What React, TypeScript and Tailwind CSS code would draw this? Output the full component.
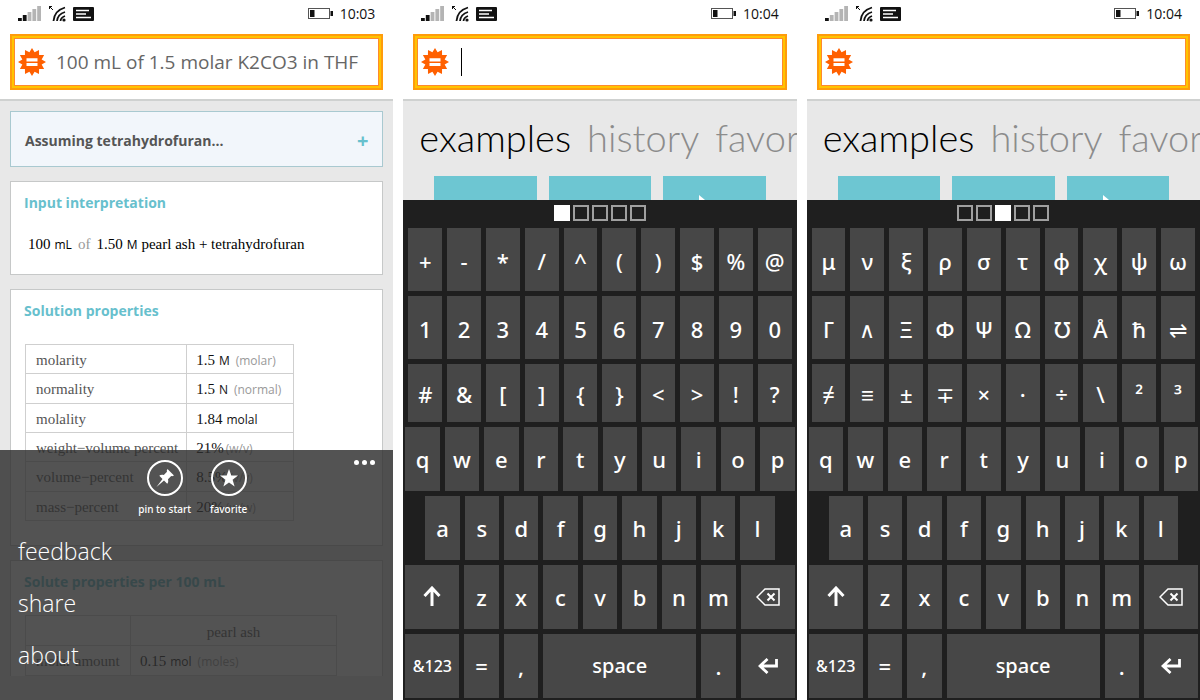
import { useState } from "react";
import type { ReactNode } from "react";

// ─── data ───────────────────────────────────────────────────────────────────

type PropertyRow = { name: string; value: string; unit: string; note?: string; tight?: boolean };

const SOLUTION_ROWS: PropertyRow[] = [
  { name: "molarity", value: "1.5", unit: "M", note: "(molar)" },
  { name: "normality", value: "1.5", unit: "N", note: "(normal)" },
  { name: "molality", value: "1.84", unit: "molal" },
  { name: "weight−volume percent", value: "21%", unit: "", note: "(w/v)", tight: true },
  { name: "volume−percent", value: "8.5%", unit: "", note: "(v/v)", tight: true },
  { name: "mass−percent", value: "20%", unit: "", note: "(w/w)", tight: true },
];

const SYMBOL_ROWS = [
  ["+", "-", "*", "/", "^", "(", ")", "$", "%", "@"],
  ["1", "2", "3", "4", "5", "6", "7", "8", "9", "0"],
  ["#", "&", "[", "]", "{", "}", "<", ">", "!", "?"],
];

const GREEK_ROWS = [
  ["μ", "ν", "ξ", "ρ", "σ", "τ", "φ", "χ", "ψ", "ω"],
  ["Γ", "∧", "Ξ", "Φ", "Ψ", "Ω", "℧", "Å", "ħ", "⇌"],
  ["≠", "≡", "±", "∓", "×", "·", "÷", "\\", "²", "³"],
];

// ─── icons ──────────────────────────────────────────────────────────────────

function LogoIcon() {
  const points = Array.from({ length: 24 }, (_, i) => {
    const r = i % 2 === 0 ? 14 : 10;
    const a = (i * Math.PI) / 12;
    return `${(14 + r * Math.sin(a)).toFixed(2)},${(14 - r * Math.cos(a)).toFixed(2)}`;
  }).join(" ");
  return (
    <svg viewBox="0 0 28 28" className="size-7 shrink-0" aria-hidden="true">
      <polygon points={points} fill="#ff6000" />
      <path d="M8.500 10.300h11v3.200h-11zM8.500 14.900h11v3.200h-11z" fill="#fff" />
    </svg>
  );
}

function SignalIcon({ bars }: { bars: number }) {
  return (
    <svg viewBox="0 0 24 16" className="h-4 w-6" aria-hidden="true">
      {[3, 6, 9, 12, 15].map((h, i) => (
        <rect key={h} x={i * 4.8} y={15 - h} width="3.8" height={h} fill={i < bars ? "#111" : "#b4b4b4"} />
      ))}
    </svg>
  );
}

function WifiIcon() {
  return (
    <svg viewBox="0 0 17 16" className="h-4 w-[17px]" fill="none" stroke="#111" strokeWidth="1.8" aria-hidden="true">
      <path d="M4.500 15C5 8.500 9 3.500 16 1.500M8 15C8.500 10.500 11 7.500 16 6M11.500 15C11.800 12.500 13 11 16 10" />
      <path d="M0 0h3L0 3zM1 1l3 3" fill="#111" strokeWidth="1" />
      <circle cx="15" cy="14" r="1.600" fill="#111" stroke="none" />
    </svg>
  );
}

function MessageIcon() {
  return (
    <svg viewBox="0 0 21 14" className="h-3.5 w-[21px]" aria-hidden="true">
      <rect width="21" height="14" rx="1" fill="#111" />
      <path d="M3 3.500h13M3 7h10M3 10.500h15" stroke="#fff" strokeWidth="1.500" />
    </svg>
  );
}

function BatteryIcon() {
  return (
    <svg viewBox="0 0 25 11" className="h-[11px] w-[25px]" aria-hidden="true">
      <rect x=".5" y=".5" width="21" height="10" fill="#fff" stroke="#555" />
      <rect x="2" y="2" width="4.500" height="7" fill="#111" />
      <rect x="22.500" y="3" width="2.500" height="5" fill="#111" />
    </svg>
  );
}

function PinIcon() {
  return (
    <svg viewBox="0 0 20 20" className="size-5" fill="#fff" aria-hidden="true">
      <path d="M12.500 1l6.500 6.500-1.800.8-1-.3-3.200 3.200c.5 2 .2 3.500-.8 4.500L9 12.500 1.500 19 7.500 11 4.300 7.800c1-1 2.500-1.300 4.500-.8L12 3.800l-.3-1z" />
    </svg>
  );
}

function StarIcon() {
  return (
    <svg viewBox="0 0 20 20" className="size-5" fill="#fff" aria-hidden="true">
      <path d="M10 1l2.300 6.500H19l-5.400 4.200 2 6.800L10 14.400l-5.600 4.100 2-6.800L1 7.500h6.700z" />
    </svg>
  );
}

function ShiftIcon() {
  return (
    <svg viewBox="0 0 18 22" className="h-[22px] w-[18px]" fill="none" stroke="#fff" strokeWidth="3" aria-hidden="true">
      <path d="M9 20V2M1.500 10L9 2l7.500 8" />
    </svg>
  );
}

function BackspaceIcon() {
  return (
    <svg viewBox="0 0 24 18" className="h-[18px] w-6" fill="none" stroke="#fff" strokeWidth="1.500" aria-hidden="true">
      <path d="M9 1h14v16H9L1 9z" />
      <path d="M11.500 5.500l7 7M18.500 5.500l-7 7" strokeWidth="2" />
    </svg>
  );
}

function EnterIcon() {
  return (
    <svg viewBox="0 0 20 16" className="h-4 w-5" fill="none" stroke="#fff" strokeWidth="2.800" aria-hidden="true">
      <path d="M18.500 1v7H2M9.500 1L2 8l7.500 7" />
    </svg>
  );
}

// ─── shared parts ───────────────────────────────────────────────────────────

function StatusBar({ time, bars }: { time: string; bars: number }) {
  return (
    <div className="flex h-[34px] items-center justify-between px-[18px] pb-[7px]">
      <div className="flex items-center gap-[7px]">
        <SignalIcon bars={bars} />
        <WifiIcon />
        <MessageIcon />
      </div>
      <div className="flex items-center gap-[7px] text-sm text-[#111]">
        <BatteryIcon />
        <time>{time}</time>
      </div>
    </div>
  );
}

function SearchBox({ initial, caret }: { initial: string; caret?: boolean }) {
  const [query, setQuery] = useState(initial);
  return (
    <div className="border-b-2 border-[#cfd1d0] px-2.5 pb-[9px]">
      <label className="flex h-14 items-center border-2 border-[#ff9c0c] px-1.5 shadow-[inset_0_0_0_2px_#ffc400,inset_0_0_0_3px_#ff8a2c]">
        <LogoIcon />
        {caret && <span className="ml-3 h-7 w-px bg-black" />}
        <input
          type="text"
          aria-label="Query"
          value={query}
          onChange={(e) => setQuery(e.target.value)}
          className="ml-2.5 w-full min-w-0 bg-transparent text-[19px] text-[#666] outline-none"
        />
      </label>
    </div>
  );
}

function Phone({ time, bars, query, caret, children }: {
  time: string;
  bars: number;
  query: string;
  caret?: boolean;
  children: ReactNode;
}) {
  return (
    <section className="relative flex min-h-screen min-w-0 flex-col overflow-hidden bg-[#e8e8e8]">
      <div className="bg-white">
        <StatusBar time={time} bars={bars} />
        <SearchBox initial={query} caret={caret} />
      </div>
      {children}
    </section>
  );
}

// ─── results ────────────────────────────────────────────────────────────────

function Pod({ title, open, children }: { title: string; open?: boolean; children: ReactNode }) {
  return (
    <article className={`border-[#c6c8c8] bg-white px-[13px] pt-2 ${open ? "border-x border-t" : "border"}`}>
      <h2 className="text-sm leading-[26px] font-bold text-[#67c0cd]">{title}</h2>
      {children}
    </article>
  );
}

function Quantity({ value, unit, note, tight }: Omit<PropertyRow, "name">) {
  return (
    <>
      <span>{value}</span>
      {unit && <span className="ml-1 font-['Open_Sans',sans-serif] text-xs">{unit}</span>}
      {note && (
        <span className={`${tight ? "ml-0.5" : "ml-1.5"} font-['Open_Sans',sans-serif] text-xs text-[#999]`}>{note}</span>
      )}
    </>
  );
}

function Results() {
  return (
    <div className="flex flex-col gap-3.5 px-2.5 pt-2.5">
      <button className="flex h-14 items-center justify-between border border-[#a9c9d0] bg-[#f2f6fb] px-3.5 pt-1 text-sm font-bold text-[#555]">
        Assuming tetrahydrofuran...
        <span className="text-xl leading-5 text-[#67c0cd]">+</span>
      </button>
      <Pod title="Input interpretation">
        <p className="px-1 pt-4 pb-[18px] font-['Liberation_Serif',serif] text-[15px] leading-6 text-black">
          100<span className="ml-1 font-['Open_Sans',sans-serif] text-xs">mL</span>
          <span className="mx-1.5 text-[#999]">of</span>1.50
          <span className="mx-1 font-['Open_Sans',sans-serif] text-xs">M</span>
          pearl ash + tetrahydrofuran
        </p>
      </Pod>
      <Pod title="Solution properties">
        <table className="mt-5 mb-6 ml-px h-[177px] border-collapse font-['Liberation_Serif',serif] text-[15px] leading-5 text-[#111]">
          <tbody>
            {SOLUTION_ROWS.map((row) => (
              <tr key={row.name}>
                <th className="w-[161px] border border-[#cfcfcf] pt-0.5 pr-2 pl-2.5 text-left font-normal whitespace-nowrap text-[#555]">
                  {row.name}
                </th>
                <td className="w-[107px] border border-[#cfcfcf] pt-0.5 pl-[9px] whitespace-nowrap">
                  <Quantity value={row.value} unit={row.unit} note={row.note} tight={row.tight} />
                </td>
              </tr>
            ))}
          </tbody>
        </table>
      </Pod>
      <Pod title="Solute properties per 100 mL" open>
        <table className="mt-5 ml-px border-collapse font-['Liberation_Serif',serif] text-[15px] leading-5 text-[#111]">
          <tbody>
            <tr className="h-[30px]">
              <td className="w-[105px] border border-[#cfcfcf]" />
              <th className="w-[206px] border border-[#cfcfcf] pt-0.5 font-normal text-[#555]">pearl ash</th>
            </tr>
            <tr className="h-[30px]">
              <th className="border border-[#cfcfcf] px-2.5 text-left font-normal whitespace-nowrap text-[#555]">molar amount</th>
              <td className="border border-[#cfcfcf] px-[9px]">
                <Quantity value="0.15" unit="mol" note="(moles)" />
              </td>
            </tr>
          </tbody>
        </table>
      </Pod>
    </div>
  );
}

function AppBar() {
  return (
    <div className="absolute inset-x-0 bottom-0 h-[250px] bg-[#2d2d2d]/82 text-white">
      <button aria-label="More" className="absolute top-2 right-[18px] flex h-2 items-center gap-[3px]">
        <span className="size-[5px] rounded-full bg-white" />
        <span className="size-[5px] rounded-full bg-white" />
        <span className="size-[5px] rounded-full bg-white" />
      </button>
      <div className="flex justify-center pt-2.5 font-['Noto_Sans',sans-serif]">
        <button className="flex w-16 flex-col items-center text-[10px] font-medium whitespace-nowrap">
          <span className="mb-1.5 flex size-9 items-center justify-center rounded-full border-2 border-white"><PinIcon /></span>
          pin to start
        </button>
        <button className="flex w-16 flex-col items-center text-[10px] font-medium">
          <span className="mb-1.5 flex size-9 items-center justify-center rounded-full border-2 border-white"><StarIcon /></span>
          favorite
        </button>
      </div>
      <nav className="flex flex-col items-start px-[18px] pt-2 text-[23px] font-light">
        <a href="#feedback" className="leading-[52px]">feedback</a>
        <a href="#share" className="leading-[52px]">share</a>
        <a href="#about" className="leading-[52px]">about</a>
      </nav>
    </div>
  );
}

// ─── keyboard ───────────────────────────────────────────────────────────────

function Key({ label, wide, children }: { label: string; wide?: boolean; children?: ReactNode }) {
  return (
    <button
      aria-label={children ? label : undefined}
      className={`flex min-w-0 flex-1 items-center justify-center bg-[#474747] ${wide ? "col-span-4" : ""}`}
    >
      {children ?? label}
    </button>
  );
}

function Keyboard({ rows, page }: { rows: string[][]; page: number }) {
  return (
    <div className="flex flex-1 flex-col gap-[5px] bg-[#1f1f1f] pb-0.5 font-['Noto_Sans',sans-serif] text-[22px] font-medium text-white">
      <div className="flex h-[23px] items-center justify-center gap-[3px] pt-[3px]">
        {[0, 1, 2, 3, 4].map((i) => (
          <span key={i} className={`size-4 border-2 ${i === page ? "border-white bg-white" : "border-[#a0a0a0]"}`} />
        ))}
      </div>
      {rows.map((row, i) => (
        <div key={i} className={`flex gap-[5px] px-[5px] leading-8 ${i === 2 ? "h-[58px]" : "h-[63px]"}`}>
          {row.map((k) => <Key key={k} label={k}><span className="pt-0.5">{k}</span></Key>)}
        </div>
      ))}
      <div className="flex h-16 gap-[5px] px-0.5">
        {"qwertyuiop".split("").map((k) => <Key key={k} label={k} />)}
      </div>
      <div className="flex h-16 gap-[5px] px-[22px]">
        {"asdfghjkl".split("").map((k) => <Key key={k} label={k} />)}
      </div>
      <div className="grid h-16 grid-cols-[54px_repeat(7,minmax(0,1fr))_54px] gap-[5px] px-0.5">
        <Key label="Shift"><ShiftIcon /></Key>
        {"zxcvbnm".split("").map((k) => <Key key={k} label={k} />)}
        <Key label="Backspace"><BackspaceIcon /></Key>
      </div>
      <div className="grid h-16 grid-cols-[54px_repeat(7,minmax(0,1fr))_54px] gap-[5px] px-0.5">
        <Key label="Symbols"><span className="text-base">&amp;123</span></Key>
        <Key label="=" />
        <Key label="," />
        <Key label="Space" wide><span className="text-xl">space</span></Key>
        <Key label="." />
        <Key label="Enter"><EnterIcon /></Key>
      </div>
    </div>
  );
}

function Browse({ rows, page }: { rows: string[][]; page: number }) {
  return (
    <>
      <nav className="flex h-[75px] gap-4 overflow-hidden px-4 pt-2 font-['Lato',sans-serif] text-[38px] leading-[56px] font-light whitespace-nowrap text-[#8c8c8c]">
        <a href="#examples" className="text-black">examples</a>
        <a href="#history">history</a>
        <a href="#favorites">favorites</a>
      </nav>
      <div className="grid h-6 grid-cols-3 gap-3 px-[31px]">
        <div className="bg-[#6dc6d2]" />
        <div className="bg-[#6dc6d2]" />
        <div className="flex items-end bg-[#6dc6d2] pl-9">
          <svg viewBox="0 0 6 5" className="h-[5px] w-1.5" aria-hidden="true">
            <path d="M0 0l6 5H0z" fill="#fff" />
          </svg>
        </div>
      </div>
      <Keyboard rows={rows} page={page} />
    </>
  );
}

// ─── page ───────────────────────────────────────────────────────────────────

export default function App() {
  return (
    <main className="grid grid-cols-3 gap-2.5 bg-white font-['Open_Sans','Noto_Sans',sans-serif]">
      <Phone time="10:03" bars={2} query="100 mL of 1.5 molar K2CO3 in THF">
        <Results />
        <AppBar />
      </Phone>
      <Phone time="10:04" bars={2} query="" caret>
        <Browse rows={SYMBOL_ROWS} page={0} />
      </Phone>
      <Phone time="10:04" bars={1} query="">
        <Browse rows={GREEK_ROWS} page={2} />
      </Phone>
    </main>
  );
}
